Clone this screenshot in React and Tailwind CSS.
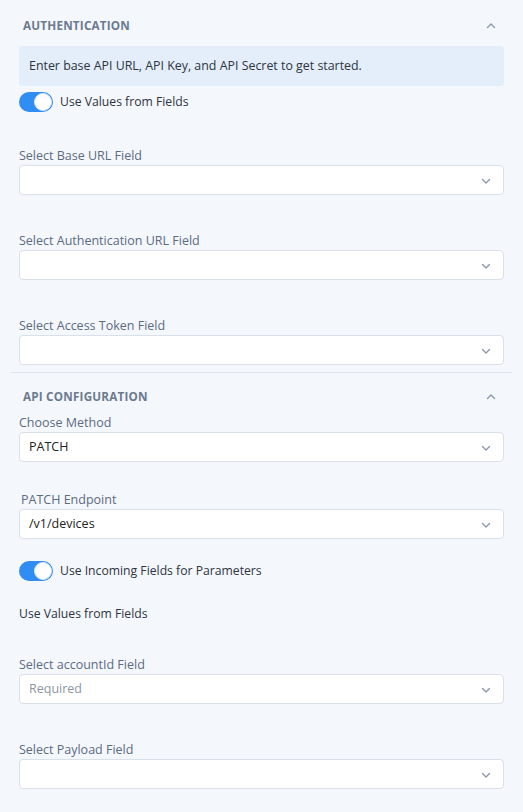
import { useState } from "react";

function Chevron({ up }) {
    return (
        <svg width="12" height="12" viewBox="0 0 12 12" fill="none" className="text-[#8a98ad]">
            <path d={up ? "M2.5 7.5 L6 4 L9.5 7.5" : "M2.5 4.5 L6 8 L9.5 4.5"} stroke="currentColor" strokeWidth="1.4" strokeLinecap="round" strokeLinejoin="round" />
        </svg>
    );
}

function Toggle({ on, onClick }) {
    return (
        <button type="button" onClick={onClick}
            className={"relative w-[34px] h-[20px] rounded-full shrink-0 " + (on ? "bg-[#2f8ef4]" : "bg-[#c9d2de]")}>
            <span className={"absolute top-[1px] w-[18px] h-[18px] rounded-full bg-white border border-[#dfe6ef] " + (on ? "left-[15px]" : "left-[1px]")}></span>
        </button>
    );
}

function SectionHeader({ title }) {
    return (
        <div className="flex items-center justify-between pl-[23px] pr-[26px] h-[24px]">
            <span className="text-[11.7px] font-bold tracking-[0.2px] text-[#6b7a8f]">{title}</span>
            <Chevron up />
        </div>
    );
}

function Select({ value, placeholder }) {
    return (
        <div className="mx-[19px] h-[30px] bg-white border border-[#d9e0ea] rounded-[4px] flex items-center justify-between pl-[9px] pr-[11px] pt-[1px]">
            <span className={"text-[12.5px] " + (value ? "text-[#222]" : "text-[#8c96a3]")}>{value || placeholder}</span>
            <Chevron />
        </div>
    );
}

function Field({ label, value, placeholder, top, labelPad }) {
    return (
        <div className={top}>
            <div className={"text-[12.5px] text-[#5d6b7f] leading-[20px] pt-[1px] -mb-[1px] " + (labelPad || "pl-[19px]")}>{label}</div>
            <Select value={value} placeholder={placeholder} />
        </div>
    );
}

export default function App() {
    const [useFields, setUseFields] = useState(true);
    const [useIncoming, setUseIncoming] = useState(true);

    return (
        <div className="w-[523px] h-[812px] bg-[#f4f7fc] overflow-hidden" style={{ fontFamily: '"Open Sans", "Noto Sans", sans-serif' }}>
            <div className="pt-[14px]">
                <SectionHeader title="AUTHENTICATION" />
                <div className="mx-[19px] mt-[8px] h-[40px] rounded-[4px] bg-[#e3eefa] flex items-center px-[10px] text-[12.4px] text-[#2d3440]">
                    Enter base API URL, API Key, and API Secret to get started.
                </div>
                <div className="flex items-center gap-[7px] pl-[19px] mt-[6px] h-[20px]">
                    <Toggle on={useFields} onClick={() => setUseFields(!useFields)} />
                    <span className="text-[12.2px] text-[#2d3440] pt-[1px]">Use Values from Fields</span>
                </div>
                <Field label="Select Base URL Field" top="mt-[33px]" />
                <Field label="Select Authentication URL Field" top="mt-[35px]" />
                <Field label="Select Access Token Field" top="mt-[35px]" />
                <div className="mx-[11px] mt-[7px] border-t border-[#dde3ec]"></div>
                <div className="mt-[12px]">
                    <SectionHeader title="API CONFIGURATION" />
                </div>
                <Field label="Choose Method" value="PATCH" top="mt-[3px]" />
                <Field label="PATCH Endpoint" value="/v1/devices" top="mt-[27px]" labelPad="pl-[21px]" />
                <div className="flex items-center gap-[7px] pl-[19px] mt-[22px] h-[20px]">
                    <Toggle on={useIncoming} onClick={() => setUseIncoming(!useIncoming)} />
                    <span className="text-[12.2px] text-[#2d3440] pt-[1px]">Use Incoming Fields for Parameters</span>
                </div>
                <div className="pl-[19px] mt-[23px] text-[12.2px] text-[#2d3440] leading-[20px]">Use Values from Fields</div>
                <Field label="Select accountId Field" placeholder="Required" top="mt-[30px]" />
                <Field label="Select Payload Field" top="mt-[35px]" />
            </div>
        </div>
    );
}
